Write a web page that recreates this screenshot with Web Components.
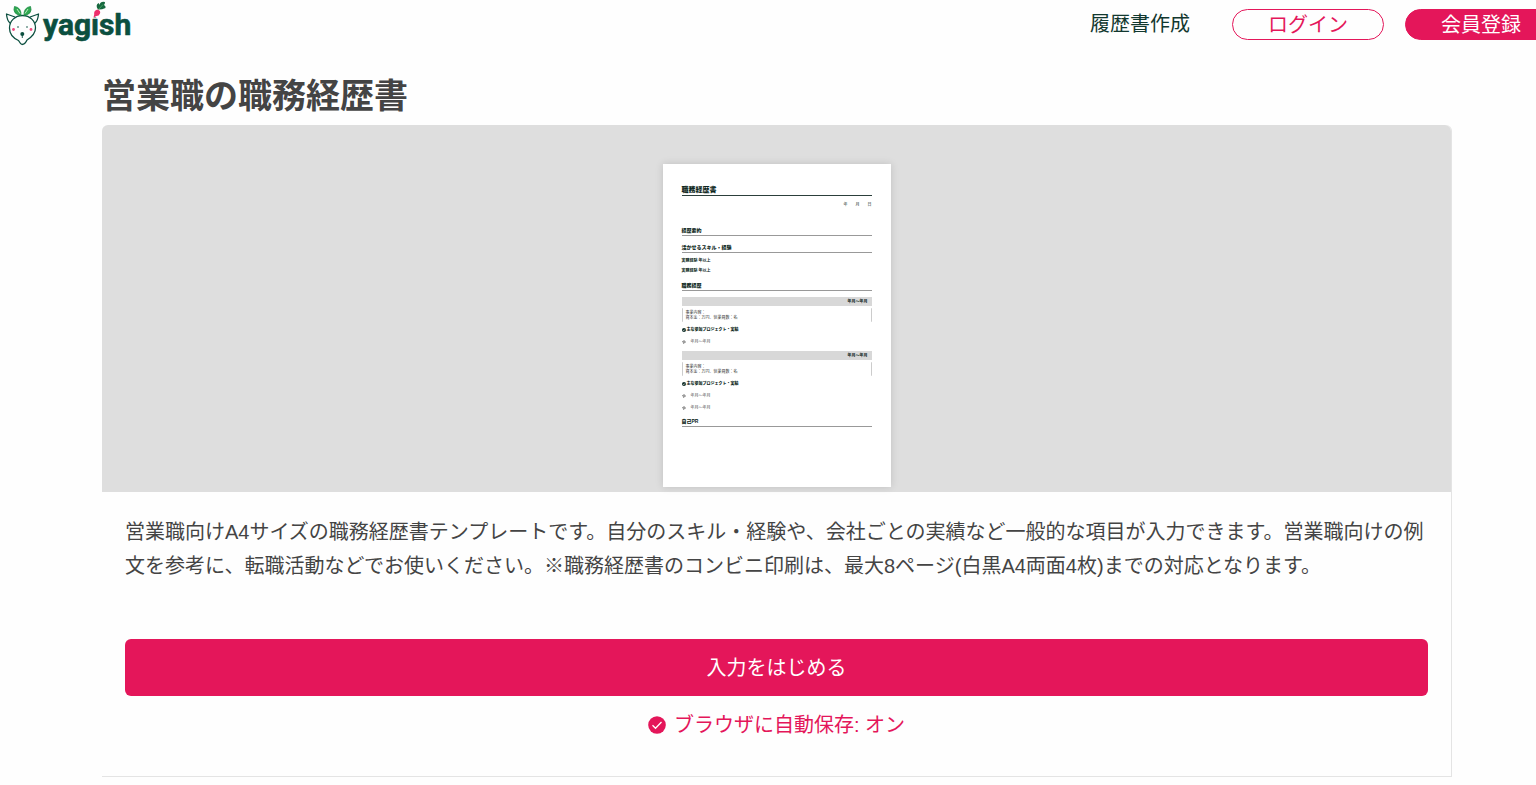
<!DOCTYPE html>
<html lang="ja">
<head>
<meta charset="utf-8">
<meta name="viewport" content="width=device-width, initial-scale=1">
<title>営業職の職務経歴書 | yagish</title>
<style>
  :root {
    --pink: #e4165a;
    --green: #0b4f3f;
    --ink: #444;
    --rule: #e4e4e4;
  }
  body {
    margin: 0;
    background: #fefefe;
    color: var(--ink);
    font: 20px/34px "Liberation Sans", "Noto Sans CJK JP", sans-serif;
  }
</style>
</head>
<body>
<yg-header></yg-header>
<yg-page heading="営業職の職務経歴書">
  <yg-card>
    <resume-sheet slot="preview"></resume-sheet>
    <span slot="text">営業職向けA4サイズの職務経歴書テンプレートです。自分のスキル・経験や、会社ごとの実績など一般的な項目が入力できます。営業職向けの例文を参考に、転職活動などでお使いください。※職務経歴書のコンビニ印刷は、最大8ページ(白黒A4両面4枚)までの対応となります。</span>
    <yg-start slot="action">入力をはじめる</yg-start>
    <yg-autosave slot="action">ブラウザに自動保存: オン</yg-autosave>
  </yg-card>
</yg-page>

<script>
const define = (name, html) => {
  const template = document.createElement('template');
  template.innerHTML = html;
  customElements.define(name, class extends HTMLElement {
    constructor() {
      super();
      this.attachShadow({ mode: 'open' }).append(template.content.cloneNode(true));
    }
    connectedCallback() {
      for (const node of this.shadowRoot.querySelectorAll('[data-attr]')) {
        node.textContent = this.getAttribute(node.dataset.attr) || '';
      }
    }
  });
};

define('yg-logo', `
  <style>
    :host { display: block; }
    a { display: block; }
    svg { display: block; width: 160px; height: 48px; }
    text {
      font: 700 30px Roboto, sans-serif; fill: var(--green);
      stroke: var(--green); stroke-width: .6px; stroke-linejoin: round;
    }
  </style>
  <a href="#" aria-label="yagish">
    <svg viewBox="0 0 160 48">
      <g fill="#fefefe" stroke="#0b4f3f" stroke-width="1.3" stroke-linejoin="round">
        <path d="M15 17 L6.500 14 Q7 21 10.500 23.500 M30 17 L38.500 14 Q38 21 34.500 23.500"/>
        <path d="M22.500 15.500 C30 15.500 35.500 21 35.500 28 C35.500 34 31 37.500 27 40 Q25 44.500 22 44.500 Q20.500 44 18.500 40.500 C13 38 9.500 34 9.500 28 C9.500 21 15 15.500 22.500 15.500Z"/>
      </g>
      <g fill="#2fa84f" stroke="#1c8a45" stroke-width=".8">
        <path d="M21 15.500 Q12 14 14.500 6.500 Q21.500 7.500 21 15.500Z"/>
        <path d="M24 15.500 Q23.500 7.500 30.500 6.500 Q33 14 24 15.500Z"/>
      </g>
      <path d="M17 9 L20 13.500 M28 9 L25 13.500" stroke="#c9efcf" stroke-width=".9"/>
      <path d="M22.300 35 v3" stroke="#0b4f3f" stroke-width=".9"/>
      <circle cx="22.300" cy="34" r="2" fill="#0b4f3f"/>
      <circle cx="18" cy="27" r=".8" fill="#0b4f3f"/><circle cx="27" cy="27" r=".8" fill="#0b4f3f"/>
      <circle cx="13.500" cy="29.500" r="1.400" fill="#f04b80"/><circle cx="31" cy="29.500" r="1.400" fill="#f04b80"/>
      <text x="43" y="35">yagish</text>
      <rect x="92" y="9" width="9" height="8" fill="#fefefe"/>
      <path d="M98 9.500 Q95 5 98.500 3 Q99.500 4 99.500 5 Q100.500 1 105 2 Q105 4 104 5 Q106 6 105.500 8 Q101 10 98 9.500Z" fill="#17683f"/>
      <path d="M99 9 L103 4.500" stroke="#58b96c" stroke-width=".7"/>
      <path d="M97.500 9.500 Q101 10.500 100 13.500 Q99 16 96.500 16 L93.500 17.500 L94.200 14.500 Q93.500 10.500 97.500 9.500Z" fill="#ee2f6c"/>
    </svg>
  </a>`);

define('yg-pill', `
  <style>
    :host { display: block; }
    button {
      box-sizing: border-box; width: 152px; height: 31px; padding: 0;
      border: 1px solid var(--pink); border-radius: 16px;
      background: none; color: var(--pink); font: inherit; line-height: 30px;
      display: block; cursor: pointer;
    }
    :host([filled]) button { background: var(--pink); color: #fff; }
  </style>
  <button type="button"><slot></slot></button>`);

define('yg-header', `
  <style>
    :host { display: block; overflow: hidden; }
    header { display: flex; justify-content: space-between; align-items: flex-start; height: 48px; }
    nav { display: flex; align-items: center; padding-top: 8px; margin-right: -21px; }
    nav a { color: #12382f; text-decoration: none; line-height: 32px; margin-right: 42px; }
    yg-pill + yg-pill { margin-left: 21px; }
  </style>
  <header>
    <yg-logo></yg-logo>
    <nav>
      <a href="#">履歴書作成</a>
      <yg-pill>ログイン</yg-pill>
      <yg-pill filled>会員登録</yg-pill>
    </nav>
  </header>`);

define('yg-page', `
  <style>
    :host { display: block; }
    main { padding: 24px 84px 0 102px; }
    h1 { margin: 0 0 5px; font-size: 34px; line-height: 48px; font-weight: 700; }
  </style>
  <main>
    <h1 data-attr="heading"></h1>
    <slot></slot>
  </main>`);

define('yg-card', `
  <style>
    :host {
      display: block; border-right: 1px solid var(--rule); border-bottom: 1px solid var(--rule);
      border-radius: 6px 6px 0 0;
    }
    .preview {
      display: flex; justify-content: center; padding: 39px 0 5px;
      background: #dedede; border-radius: 6px 6px 0 0;
    }
    .body { padding: 23px 23px 34px; }
    p { margin: 0 0 56px; }
  </style>
  <div class="preview"><slot name="preview"></slot></div>
  <div class="body">
    <p><slot name="text"></slot></p>
    <slot name="action"></slot>
  </div>`);

define('yg-start', `
  <style>
    :host { display: block; margin-bottom: 12px; }
    button {
      display: block; width: 100%; height: 57px; padding: 0; border: 0; border-radius: 6px;
      background: var(--pink); color: #fff; font: inherit; cursor: pointer;
    }
  </style>
  <button type="button"><slot></slot></button>`);

define('yg-autosave', `
  <style>
    :host { display: flex; justify-content: center; }
    button {
      display: flex; align-items: center; gap: 8px; padding: 0; border: 0;
      background: none; color: var(--pink); font: inherit; cursor: pointer;
    }
    svg { width: 18px; height: 18px; }
  </style>
  <button type="button">
    <svg viewBox="0 0 18 18" aria-hidden="true">
      <circle cx="9" cy="9" r="8.800" fill="#e4165a"/>
      <path d="M4.500 9.300 L7.500 12.300 L13.500 6" fill="none" stroke="#fff" stroke-width="1.300"/>
    </svg>
    <span><slot></slot></span>
  </button>`);

define('sheet-heading', `
  <style>
    :host { display: block; }
    h3 {
      margin: 0; font-size: 5px; line-height: 8px; padding-bottom: 1px; font-weight: 900;
      border-bottom: 1px solid #999;
    }
  </style>
  <h3><slot></slot></h3>`);

define('sheet-job', `
  <style>
    :host { display: block; font-size: 4px; line-height: 5px; }
    .period {
      background: #d8d8d8; text-align: right; font-weight: 700; line-height: 9px;
      padding-right: 4px; margin-bottom: 2px;
    }
    .company {
      padding: 2px 3px; border: solid #ccc; border-width: 0 1px; border-radius: 1px;
      margin-bottom: 5px; color: #333;
    }
    .projects { display: flex; align-items: center; gap: 1px; font-weight: 900; }
    svg { width: 4px; height: 4px; flex: none; }
    ::slotted(*) { margin-top: 7px; }
  </style>
  <div class="period">年月〜年月</div>
  <div class="company">事業内容：<br>資本金：万円、従業員数：名</div>
  <div class="projects">
    <svg viewBox="0 0 4 4" aria-hidden="true"><circle cx="2" cy="2" r="2" fill="#12302a"/><path d="M1 2l.8.8L3 1.300" fill="none" stroke="#fff" stroke-width=".5"/></svg>
    <span>主な参加プロジェクト・実績</span>
  </div>
  <slot></slot>`);

define('sheet-project', `
  <style>
    :host { display: flex; align-items: center; gap: 5px; font-size: 4px; line-height: 5px; color: #444; }
    svg { width: 4px; height: 4px; }
  </style>
  <svg viewBox="0 0 4 4" aria-hidden="true"><path d="M2 .6L3.400 2 2 3.400.6 2Z" fill="none" stroke="#333" stroke-width=".8"/></svg>
  <span>年月〜年月</span>`);

define('resume-sheet', `
  <style>
    :host {
      display: block; box-sizing: border-box; width: 228px; min-height: 323px;
      padding: 21px 19px; background: #fff; color: #0c2620; box-shadow: 0 0 8px #0002;
    }
    h2 {
      margin: 0; font-size: 7px; line-height: 10px; font-weight: 900;
      border-bottom: 1px solid #2c3f3b;
    }
    .date { display: flex; justify-content: flex-end; gap: 8px; font-size: 4px; line-height: 5px; margin: 6px 0 19px; }
    p { margin: 5px 0 0; font-size: 4px; line-height: 5px; font-weight: 700; }
    .next { margin-top: 7px; }
    .work { margin: 8px 0 6px; }
    sheet-job + sheet-job { margin-top: 7px; }
    .pr { margin-top: 7px; }
  </style>
  <h2>職務経歴書</h2>
  <div class="date"><span>年</span><span>月</span><span>日</span></div>
  <sheet-heading>経歴要約</sheet-heading>
  <sheet-heading class="next">活かせるスキル・経験</sheet-heading>
  <p>実務経験 年以上</p>
  <p>実務経験 年以上</p>
  <sheet-heading class="work">職務経歴</sheet-heading>
  <sheet-job><sheet-project></sheet-project></sheet-job>
  <sheet-job><sheet-project></sheet-project><sheet-project></sheet-project></sheet-job>
  <sheet-heading class="pr">自己PR</sheet-heading>`);
</script>
</body>
</html>
